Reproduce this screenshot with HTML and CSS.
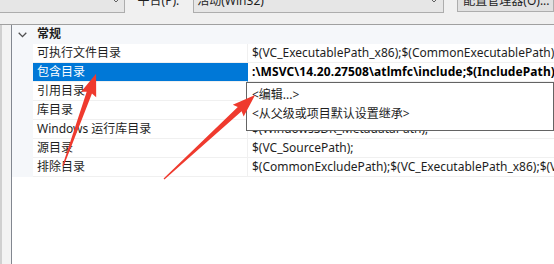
FILE: index.html
```html
<!DOCTYPE html>
<html lang="zh-CN">
<head>
<meta charset="utf-8">
<title>属性页</title>
<link rel="stylesheet" href="styles.css">
</head>
<body>
  <div class="toolbar">
    <div class="combo combo-config">
      <svg class="chev" width="8" height="5" viewBox="0 0 8 5"><polyline points="0.5,0.5 4,4 7.5,0.5" fill="none" stroke="#606060" stroke-width="1"/></svg>
    </div>
    <span class="label">平台(P):</span>
    <div class="combo combo-platform">
      <span class="combo-text">活动(Win32)</span>
      <svg class="chev" width="8" height="5" viewBox="0 0 8 5"><polyline points="0.5,0.5 4,4 7.5,0.5" fill="none" stroke="#606060" stroke-width="1"/></svg>
    </div>
    <div class="button"><span class="button-text">配置管理器(O)...</span></div>
  </div>
  <div class="main">
    <div class="side"></div>
    <div class="grid">
      <div class="row cat-row">
        <span class="margin"><svg class="cat-chev" width="9" height="6" viewBox="0 0 9 6"><polyline points="0.7,0.7 4.5,4.6 8.3,0.7" fill="none" stroke="#505050" stroke-width="1.3"/></svg></span>
        <span class="cat">常规</span>
      </div>
      <div class="row"><span class="margin"></span><span class="name">可执行文件目录</span><span class="value">$(VC_ExecutablePath_x86);$(CommonExecutablePath)</span></div>
      <div class="row selected"><span class="margin"></span><span class="name">包含目录</span><span class="value">:\MSVC\14.20.27508\atlmfc\include;$(IncludePath)</span></div>
      <div class="row"><span class="margin"></span><span class="name">引用目录</span><span class="value">$(VC_ReferencesPath_x86);</span></div>
      <div class="row"><span class="margin"></span><span class="name">库目录</span><span class="value">$(VC_LibraryPath_x86);$(WindowsSDK_LibraryPath_x86)</span></div>
      <div class="row"><span class="margin"></span><span class="name">Windows 运行库目录</span><span class="value">$(WindowsSDK_MetadataPath);</span></div>
      <div class="row"><span class="margin"></span><span class="name">源目录</span><span class="value">$(VC_SourcePath);</span></div>
      <div class="row"><span class="margin"></span><span class="name">排除目录</span><span class="value">$(CommonExcludePath);$(VC_ExecutablePath_x86);$(VC_LibraryPath_x86)</span></div>
      <div class="dropdown">
        <div class="item">&lt;编辑...&gt;</div>
        <div class="item">&lt;从父级或项目默认设置继承&gt;</div>
      </div>
    </div>
  </div>
  <svg class="annotations" width="554" height="264" viewBox="0 0 554 264">
    <g transform="translate(63,166) rotate(-70.27)">
      <polygon points="0,-0.6 78,-2.8 76,-8 98,0 76,8 78,2.8 0,0.6" fill="#ef3a2e"/>
    </g>
    <g transform="translate(164,179) rotate(-42.7)">
      <polygon points="0,-0.6 103,-2.8 101,-8 124,0 101,8 103,2.8 0,0.6" fill="#ef3a2e"/>
    </g>
  </svg>
</body>
</html>
```

FILE: styles.css
```css
* {
  box-sizing: border-box;
}

html,
body {
  margin: 0;
  padding: 0;
}

body {
  width: 554px;
  height: 264px;
  overflow: hidden;
  position: relative;
  background: #ffffff;
  font-family: "Noto Sans", "Noto Sans CJK SC", sans-serif;
  font-size: 12px;
  color: #1e1e1e;
}

/* ---------- toolbar ---------- */
.toolbar {
  height: 25px;
  background: #f0f0f0;
  border-bottom: 1px solid #a0a0a0;
  display: flex;
  align-items: flex-start;
  overflow: hidden;
}

.combo {
  height: 13px;
  background: #e6e6e6;
  border: 1px solid #adadad;
  border-top: none;
  display: flex;
  align-items: flex-start;
  position: relative;
}

.combo-config {
  width: 130px;
  margin-left: -1px;
  justify-content: flex-end;
  padding-right: 4px;
}

.chev {
  display: block;
  margin-top: -2px;
}

.label {
  margin-left: 13px;
  margin-top: -7px;
  line-height: 15px;
  white-space: nowrap;
}

.combo-platform {
  width: 260px;
  margin-left: 14px;
  justify-content: space-between;
  padding-left: 3px;
  padding-right: 5px;
}

.combo-text {
  margin-top: -7px;
  line-height: 15px;
  white-space: nowrap;
}

.button {
  margin-left: 13px;
  width: 100px;
  height: 12px;
  background: #e1e1e1;
  border: 1px solid #adadad;
  border-top: none;
  padding-left: 5px;
  white-space: nowrap;
  overflow: hidden;
}

.button-text {
  display: block;
  margin-top: -7px;
  line-height: 15px;
}

/* ---------- main ---------- */
.main {
  display: flex;
  height: 239px;
}

.side {
  width: 11px;
  flex: none;
  background: #f3f3f3;
  border-left: 2px solid #d0d0d0;
}

.grid {
  flex: 1;
  position: relative;
  border-left: 1px solid #828790;
  background: #ffffff;
  overflow: hidden;
}

.row {
  display: grid;
  grid-template-columns: 21px 215px 1fr;
  height: 19px;
  line-height: 18px;
}

.margin {
  background: #f5f7fa;
  display: flex;
  align-items: center;
  justify-content: center;
}

.name {
  border-bottom: 1px solid #f0f0f0;
  border-right: 1px solid #f0f0f0;
  padding-left: 4px;
  white-space: nowrap;
}

.value {
  border-bottom: 1px solid #f0f0f0;
  padding-left: 4px;
  white-space: nowrap;
  overflow: hidden;
}

.cat-row {
  background: #f5f7fa;
  grid-template-columns: 21px 1fr;
}

.cat {
  padding-left: 4px;
  font-weight: bold;
}

.cat-chev {
  display: block;
  margin-top: 1px;
}

.selected .name {
  background: #0078d7;
  color: #ffffff;
  border-right-color: #0078d7;
}

.selected .value {
  font-weight: bold;
  color: #000000;
  letter-spacing: 0.1px;
}

/* ---------- dropdown ---------- */
.dropdown {
  position: absolute;
  left: 234px;
  top: 57px;
  right: 0;
  height: 49px;
  background: #ffffff;
  border: 1px solid #646464;
  padding-left: 5px;
  padding-top: 2px;
}

.item {
  height: 19px;
  line-height: 19px;
  white-space: nowrap;
}

/* ---------- annotations ---------- */
.annotations {
  position: absolute;
  left: 0;
  top: 0;
  pointer-events: none;
}
```
